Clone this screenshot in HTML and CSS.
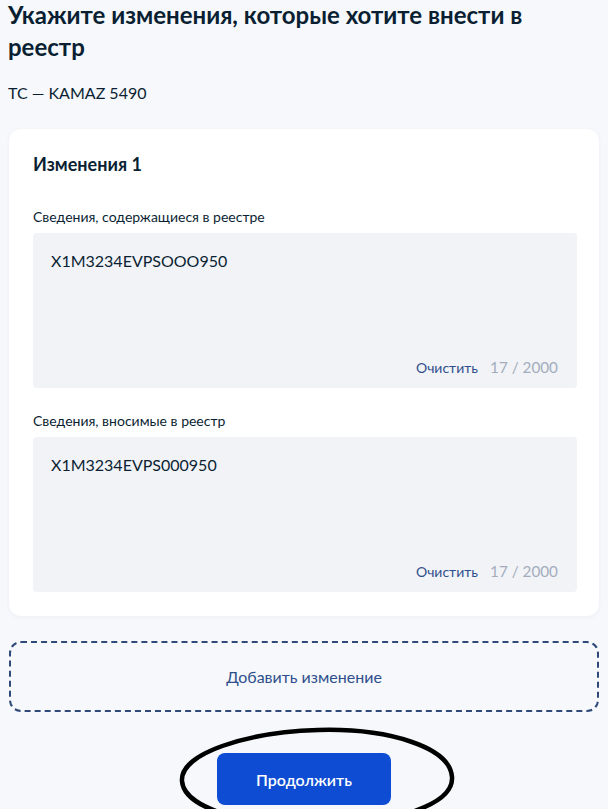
FILE: index.html
```html
<!DOCTYPE html>
<html lang="ru">
<head>
<meta charset="utf-8">
<title>Изменения в реестр</title>
<link rel="stylesheet" href="styles.css">
</head>
<body>
<main class="page">
  <h1 class="title">Укажите изменения, которые хотите внести в реестр</h1>
  <p class="subtitle">ТС — KAMAZ 5490</p>

  <section class="card">
    <h2 class="card-title">Изменения 1</h2>

    <div class="field">
      <label class="field-label">Сведения, содержащиеся в реестре</label>
      <div class="textarea">
        <div class="textarea-value">X1M3234EVPSOOO950</div>
        <div class="textarea-footer">
          <span class="clear-link">Очистить</span>
          <span class="counter">17 / 2000</span>
        </div>
      </div>
    </div>

    <div class="field">
      <label class="field-label">Сведения, вносимые в реестр</label>
      <div class="textarea">
        <div class="textarea-value">X1M3234EVPS000950</div>
        <div class="textarea-footer">
          <span class="clear-link">Очистить</span>
          <span class="counter">17 / 2000</span>
        </div>
      </div>
    </div>
  </section>

  <div class="add-change">Добавить изменение</div>

  <div class="actions">
    <button class="btn-primary" type="button">Продолжить</button>
    <svg class="annotation" width="290" height="110" viewBox="0 0 290 110" aria-hidden="true">
      <path d="M140 3 C 210 1, 272 20, 274 50 C 276 78, 215 96, 150 98 C 80 101, 6 84, 4 54 C 2 26, 70 5, 140 3 Z" fill="none" stroke="#000" stroke-width="4.5"/>
    </svg>
  </div>
</main>
</body>
</html>
```

FILE: styles.css
```css
* {
  box-sizing: border-box;
}

html, body {
  margin: 0;
  padding: 0;
  background: #f6f8fb;
  height: 100%;
  overflow: hidden;
}

body {
  font-family: Lato, "Noto Sans", "Liberation Sans", sans-serif;
  color: #0b1f33;
}

.page {
  padding: 0 9px 0 8px;
}

.title {
  margin: -1px 0 0;
  font-size: 24px;
  line-height: 32px;
  font-weight: 700;
  color: #0b1f33;
}

.subtitle {
  margin: 18px 0 0;
  font-size: 16px;
  line-height: 24px;
  color: #0b1f33;
}

.card {
  margin: 24px 0 0 1px;
  background: #ffffff;
  border-radius: 12px;
  padding: 23px 22px 24px 24px;
  box-shadow: 0 1px 4px rgba(30, 60, 110, 0.05);
}

.card-title {
  margin: 0;
  font-size: 18px;
  line-height: 24px;
  font-weight: 700;
  color: #0b1f33;
}

.field {
  display: flex;
  flex-direction: column;
  margin-top: 31px;
}

.field + .field {
  margin-top: 23px;
}

.field-label {
  font-size: 14px;
  line-height: 20px;
  color: #0b1f33;
  margin-bottom: 6px;
}

.textarea {
  height: 155px;
  background: #f1f3f7;
  border-radius: 4px;
  padding: 16px 19px 10px 18px;
  display: flex;
  flex-direction: column;
  justify-content: space-between;
}

.textarea-value {
  font-size: 16px;
  line-height: 24px;
  color: #0b1f33;
}

.textarea-footer {
  display: flex;
  justify-content: flex-end;
  align-items: baseline;
  gap: 12px;
}

.clear-link {
  font-size: 14px;
  line-height: 20px;
  color: #2f4f8c;
}

.counter {
  font-size: 15.3px;
  line-height: 20px;
  color: #a3adbc;
}

.add-change {
  margin: 25px 0 0 1px;
  height: 71px;
  border: 2px dashed #2f4a78;
  border-radius: 12px;
  display: flex;
  align-items: center;
  justify-content: center;
  font-size: 16px;
  color: #2f4f8c;
}

.actions {
  position: relative;
  display: flex;
  justify-content: center;
  margin-top: 41px;
}

.btn-primary {
  width: 174px;
  height: 52px;
  border: none;
  border-radius: 8px;
  background: #0d4cd3;
  color: #ffffff;
  font-family: Lato, "Noto Sans", "Liberation Sans", sans-serif;
  font-size: 16px;
  font-weight: 600;
  margin-left: 1px;
}

.annotation {
  position: absolute;
  left: 170px;
  top: -26px;
  pointer-events: none;
}
```
